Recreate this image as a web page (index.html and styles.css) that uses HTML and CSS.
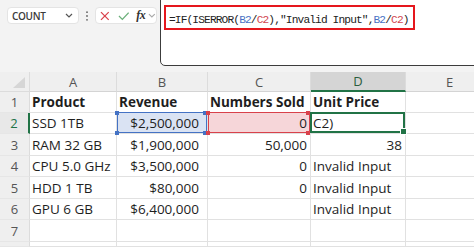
FILE: index.html
```html
<!DOCTYPE html>
<html lang="en">
<head>
  <meta charset="UTF-8" />
  <title>Excel - ISERROR</title>
  <link rel="stylesheet" href="styles.css">
</head>
<body>
  <div class="toolbar">
    <div class="namebox">
      <span>COUNT</span>
      <svg class="chev" width="8" height="5" viewBox="0 0 8 5"><path d="M1 1 L4 4 L7 1" /></svg>
    </div>
    <svg class="grip" width="4" height="10" viewBox="0 0 4 10">
      <circle cx="2" cy="1.2" r="0.9" /><circle cx="2" cy="5" r="0.9" /><circle cx="2" cy="8.8" r="0.9" />
    </svg>
    <div class="fbtns">
      <svg class="ico-x" width="10" height="10" viewBox="0 0 10 10"><path d="M1 1 L9 9 M9 1 L1 9" /></svg>
      <svg class="ico-ok" width="12" height="10" viewBox="0 0 12 10"><path d="M1 5 L4.5 8.5 L11 1.5" /></svg>
      <span class="fx">fx</span>
      <svg class="chev light" width="8" height="5" viewBox="0 0 8 5"><path d="M1 1 L4 4 L7 1" /></svg>
    </div>
    <div class="formula">
      <div class="formula-hl">
        <code>=IF(ISERROR(<b class="ref-b">B2</b>/<b class="ref-c">C2</b>),"Invalid Input",<b class="ref-b">B2</b>/<b class="ref-c">C2</b>)</code>
      </div>
    </div>
  </div>

  <div class="sheet">
    <div class="corner"><svg width="12" height="11" viewBox="0 0 12 11"><path d="M12 0 L12 11 L0 11 Z" /></svg></div>
    <div class="col-h">A</div>
    <div class="col-h">B</div>
    <div class="col-h">C</div>
    <div class="col-h active-col">D</div>
    <div class="col-h">E</div>

    <div class="row-h">1</div>
    <div class="cell bold">Product</div>
    <div class="cell bold">Revenue</div>
    <div class="cell bold">Numbers Sold</div>
    <div class="cell bold">Unit Price</div>
    <div class="cell"></div>

    <div class="row-h active-row">2</div>
    <div class="cell">SSD 1TB</div>
    <div class="cell num money ref-cell-b">$2,500,000</div>
    <div class="cell num ref-cell-c">0</div>
    <div class="cell editing">C2)</div>
    <div class="cell"></div>

    <div class="row-h">3</div>
    <div class="cell">RAM 32 GB</div>
    <div class="cell num money">$1,900,000</div>
    <div class="cell num">50,000</div>
    <div class="cell num">38</div>
    <div class="cell"></div>

    <div class="row-h">4</div>
    <div class="cell">CPU 5.0 GHz</div>
    <div class="cell num money">$3,500,000</div>
    <div class="cell num">0</div>
    <div class="cell">Invalid Input</div>
    <div class="cell"></div>

    <div class="row-h">5</div>
    <div class="cell">HDD 1 TB</div>
    <div class="cell num money">$80,000</div>
    <div class="cell num">0</div>
    <div class="cell">Invalid Input</div>
    <div class="cell"></div>

    <div class="row-h">6</div>
    <div class="cell">GPU 6 GB</div>
    <div class="cell num money">$6,400,000</div>
    <div class="cell num"></div>
    <div class="cell">Invalid Input</div>
    <div class="cell"></div>

    <div class="row-h">7</div>
    <div class="cell"></div>
    <div class="cell"></div>
    <div class="cell"></div>
    <div class="cell"></div>
    <div class="cell"></div>

    <div class="row-h"></div>
    <div class="cell"></div>
    <div class="cell"></div>
    <div class="cell"></div>
    <div class="cell"></div>
    <div class="cell"></div>
  </div>
</body>
</html>
```

FILE: styles.css
```css
:root {
  --chrome: #f3f3f3;
  --head: #efefef;
  --grid: #e1e1e1;
  --green: #217346;
  --blue: #4472c4;
  --red: #d9414b;
}

* {
  box-sizing: border-box;
}

body {
  margin: 0;
  width: 474px;
  height: 247px;
  overflow: hidden;
  background: var(--chrome);
  font-family: "Open Sans", "Liberation Sans", sans-serif;
  color: #222;
}

/* toolbar / formula bar */

.toolbar {
  display: flex;
  align-items: flex-start;
  height: 72px;
}

.namebox {
  display: flex;
  align-items: center;
  justify-content: space-between;
  width: 72px;
  height: 17px;
  margin: 7px 0 0 7px;
  padding: 0 5px 0 4px;
  background: #fff;
  border: 1px solid #e4e4e4;
  border-radius: 4px;
  font-size: 10px;
  font-weight: 600;
  letter-spacing: -0.3px;
  color: #3a3a3a;
}

.chev path {
  fill: none;
  stroke: #555;
  stroke-width: 1.2;
}

.chev.light path {
  stroke: #aaa;
}

.grip {
  margin: 11px 6px 0 6px;
  fill: #666;
}

.fbtns {
  display: flex;
  align-items: center;
  gap: 8px;
  width: 62px;
  height: 17px;
  margin-top: 7px;
  padding-left: 4px;
  background: #fff;
  border: 1px solid #e4e4e4;
  border-radius: 4px;
}

.ico-x path {
  fill: none;
  stroke: #d9414b;
  stroke-width: 1.3;
}

.ico-ok path {
  fill: none;
  stroke: #6bb07a;
  stroke-width: 1.3;
}

.fx {
  margin-left: -1px;
  font-family: "Liberation Serif", serif;
  font-style: italic;
  font-weight: bold;
  font-size: 12px;
  color: #333;
  letter-spacing: -0.5px;
}

.fbtns .chev {
  margin-left: -5px;
}

.formula {
  flex: 1;
  height: 68px;
  margin: -2px -4px 0 3px;
  padding: 6px 0 0 3px;
  background: #fff;
  border: 1.5px solid #3c3c3c;
  border-radius: 0 0 0 5px;
}

.formula-hl {
  width: 251px;
  height: 25px;
  padding: 2px 0 0 3px;
  border: 2px solid #e5171d;
  line-height: 17px;
}

.formula-hl code {
  font-family: "Liberation Mono", monospace;
  font-size: 11.2px;
  letter-spacing: -0.87px;
  color: #222;
}

.formula-hl b {
  font-weight: normal;
}

.ref-b {
  color: #4a72c4;
}

.ref-c {
  color: #d24750;
}

/* sheet grid */

.sheet {
  display: grid;
  grid-template-columns: 30px 87px 91px 103px 95px 1fr;
  grid-template-rows: 20px 21px 21px 22px 21px 22px 21px 22px 5px;
  margin-right: -20px;
  overflow: hidden;
}

.corner {
  display: flex;
  align-items: flex-end;
  justify-content: flex-end;
  padding: 0 4px 3px 0;
  background: var(--head);
  border-right: 1px solid #dcdcdc;
  border-bottom: 1px solid #dcdcdc;
}

.corner svg {
  fill: #d6d6d6;
}

.col-h {
  display: flex;
  align-items: center;
  justify-content: center;
  background: var(--head);
  border-right: 1px solid #dcdcdc;
  border-bottom: 1px solid #d4d4d4;
  font-size: 13px;
  color: #555;
}

.col-h.active-col {
  background: #d5d5d5;
  border-bottom: 2px solid var(--green);
  color: #2b5e3e;
}

.row-h {
  display: flex;
  align-items: flex-end;
  justify-content: center;
  padding-bottom: 1px;
  background: var(--head);
  border-right: 1px solid #dcdcdc;
  border-bottom: 1px solid #e6e6e6;
  font-size: 13px;
  line-height: 18px;
  color: #555;
}

.row-h.active-row {
  background: #e8e8e8;
  border-right: 2px solid var(--green);
  color: var(--green);
}

.cell {
  display: flex;
  align-items: flex-end;
  padding: 0 3px 1px 2px;
  background: #fff;
  border-right: 1px solid var(--grid);
  border-bottom: 1px solid var(--grid);
  font-size: 13.5px;
  line-height: 18px;
  white-space: nowrap;
  color: #1e1e1e;
}

.cell.bold {
  font-weight: bold;
}

.cell.num {
  justify-content: flex-end;
}

.cell.money {
  padding-right: 8px;
}

.ref-cell-b,
.ref-cell-c,
.editing {
  position: relative;
}

.ref-cell-b {
  background: #dae3f3;
}

.ref-cell-c {
  background: #f6d6d9;
}

.ref-cell-b::before,
.ref-cell-c::before,
.editing::before {
  content: '';
  position: absolute;
  inset: -1px 0 0 0;
  border: 1.5px solid var(--blue);
}

.ref-cell-c::before {
  border-color: var(--red);
}

.editing::before {
  inset: -1px 0 0 -1px;
  border: 2px solid var(--green);
}

/* corner handles of the reference boxes */
.ref-cell-b::after,
.ref-cell-c::after {
  content: '';
  position: absolute;
  top: -2px;
  left: -2px;
  width: 4px;
  height: 4px;
  background: var(--blue);
  box-shadow: 88px 0 var(--blue), 0 20px var(--blue), 88px 20px var(--blue);
}

.ref-cell-c::after {
  background: var(--red);
  box-shadow: 100px 0 var(--red), 0 20px var(--red), 100px 20px var(--red);
}

.editing::after {
  content: '';
  position: absolute;
  right: -2px;
  bottom: -2px;
  width: 5px;
  height: 5px;
  background: var(--green);
  border: 1px solid #fff;
}
```
